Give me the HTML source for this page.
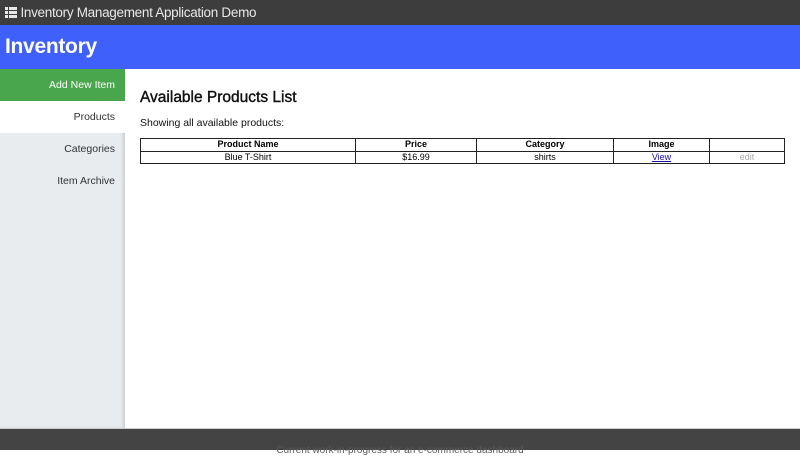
<!DOCTYPE html>
<html><head><style>
*{margin:0;padding:0;box-sizing:border-box}
body{width:800px;height:450px;overflow:hidden;font-family:"Liberation Sans",sans-serif;background:#fff;position:relative}
.top{position:absolute;top:0;left:0;width:800px;height:25px;background:#3d3d3d;color:#e8e8e8;font-size:13.5px;letter-spacing:-0.3px;line-height:25px;padding-left:5px}
.blue{position:absolute;top:25px;left:0;width:800px;height:44px;background:#4060fc;color:#fff;font-size:21px;font-weight:bold;line-height:44px;padding-left:5px;letter-spacing:-0.3px}
.side{position:absolute;top:69px;left:0;width:125px;height:359px;background:#e8ecef;box-shadow:inset -3px 0 3px -1px #ccc}
.side div{height:32px;line-height:32px;text-align:right;padding-right:10px;font-size:10.5px;color:#333}
.side .g{background:#4aa64c;color:#fff}
.side .w{background:#fff}
h1{position:absolute;left:140px;top:89px;font-size:15.5px;font-weight:normal;color:#111;-webkit-text-stroke:0.4px #111}
.sub{position:absolute;left:140px;top:117px;font-size:10.5px;color:#111}
table{position:absolute;left:140px;top:138px;width:645px;border-collapse:collapse;font-size:9px}
td,th{border:1px solid #222;height:12.5px;text-align:center;padding:0;line-height:11px}
th{font-weight:bold}
a{color:#1a0dab}
.foot{position:absolute;top:428px;left:0;width:800px;height:22px;background:#444;border-top:1px solid #ccc;color:#5a5a5a;font-size:10px;text-align:center;padding-top:16px}
</style></head><body>
<div class="top"><svg width="12" height="11" viewBox="0 0 12 11" style="vertical-align:-1px"><g fill="#e8e8e8"><rect x="0" y="0" width="3" height="3"/><rect x="4" y="0" width="8" height="3"/><rect x="0" y="4" width="3" height="3"/><rect x="4" y="4" width="8" height="3"/><rect x="0" y="8" width="3" height="3"/><rect x="4" y="8" width="8" height="3"/></g></svg> Inventory Management Application Demo</div>
<div class="blue">Inventory</div>
<div class="side"><div class="g">Add New Item</div><div class="w">Products</div><div>Categories</div><div>Item Archive</div></div>
<h1>Available Products List</h1>
<div class="sub">Showing all available products:</div>
<table><tr><th style="width:215px">Product Name</th><th style="width:121px">Price</th><th style="width:137px">Category</th><th style="width:96px">Image</th><th></th></tr>
<tr><td>Blue T-Shirt</td><td>$16.99</td><td>shirts</td><td><a href="#">View</a></td><td style="color:#aaa">edit</td></tr></table>
<div class="foot">Current work-in-progress for an e-commerce dashboard</div>
</body></html>
